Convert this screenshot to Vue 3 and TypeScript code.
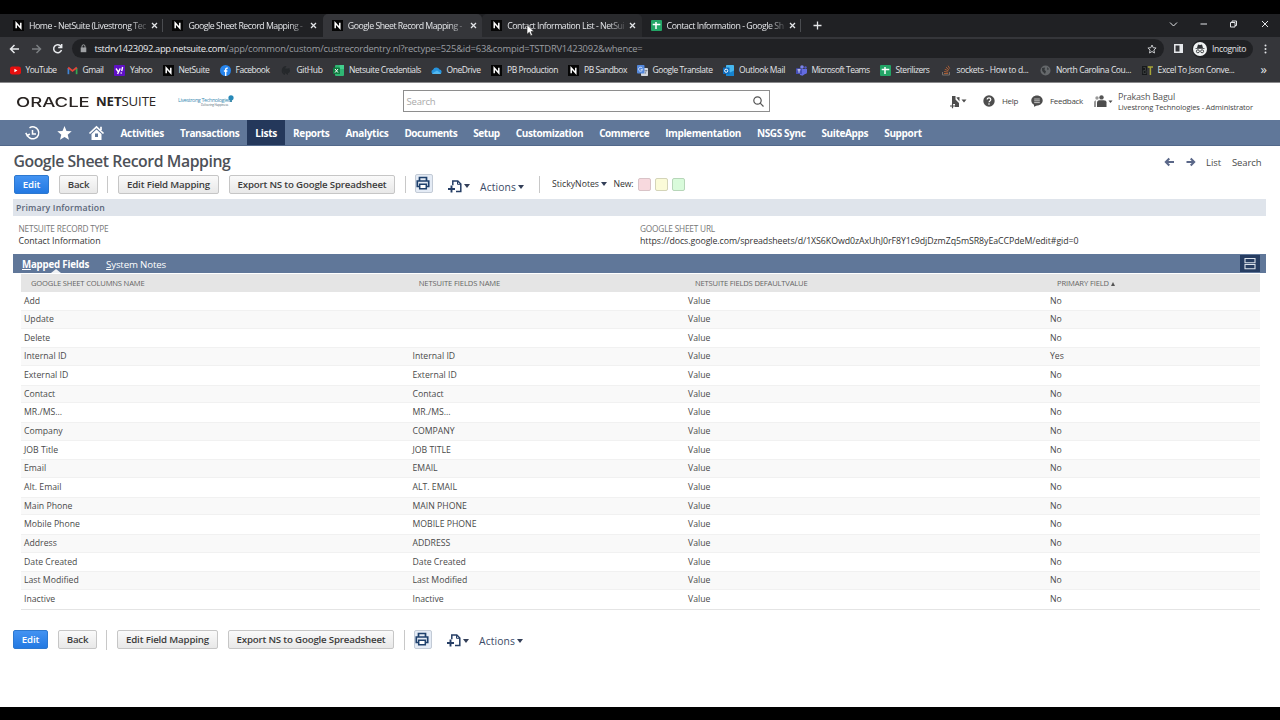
<script setup lang="ts">
import type { Directive } from 'vue'

interface Bookmark { label: string; kind: string; x: number; w: number }
interface Field { sheet: string; ns: string; primary?: boolean }

// Tracks a label so that it takes exactly the given width in pixels.
const vFit: Directive<HTMLElement, number> = {
  mounted(el, { value }) {
    const text = el.textContent ?? ''
    const natural = el.getBoundingClientRect().width
    el.style.letterSpacing = `${(value - natural) / text.length}px`
  },
}

const tabs = [
  { title: 'Home - NetSuite (Livestrong Tec', w: 117, kind: 'n', state: 'edged' },
  { title: 'Google Sheet Record Mapping -', w: 114, kind: 'n', state: '' },
  { title: 'Google Sheet Record Mapping -', w: 114, kind: 'n', state: 'active' },
  { title: 'Contact Information List - NetSui', w: 117, kind: 'n', state: 'hover' },
  { title: 'Contact Information - Google Sh', w: 117, kind: 'sheet', state: 'edged' },
]

const bookmarks: Bookmark[] = [
  { label: 'YouTube', kind: 'youtube', x: 9, w: 31 },
  { label: 'Gmail', kind: 'gmail', x: 66, w: 21 },
  { label: 'Yahoo', kind: 'yahoo', x: 113.5, w: 22 },
  { label: 'NetSuite', kind: 'n', x: 162, w: 31 },
  { label: 'Facebook', kind: 'facebook', x: 219, w: 34 },
  { label: 'GitHub', kind: 'github', x: 280, w: 26 },
  { label: 'Netsuite Credentials', kind: 'excel', x: 332.5, w: 72 },
  { label: 'OneDrive', kind: 'onedrive', x: 430, w: 34 },
  { label: 'PB Production', kind: 'n', x: 490.5, w: 51 },
  { label: 'PB Sandbox', kind: 'n', x: 567.5, w: 43 },
  { label: 'Google Translate', kind: 'translate', x: 636, w: 60 },
  { label: 'Outlook Mail', kind: 'outlook', x: 722.5, w: 46 },
  { label: 'Microsoft Teams', kind: 'teams', x: 795, w: 58 },
  { label: 'Sterilizers', kind: 'sheet', x: 879, w: 34 },
  { label: 'sockets - How to d...', kind: 'stack', x: 940, w: 72 },
  { label: 'North Carolina Cou...', kind: 'globe', x: 1039.5, w: 75 },
  { label: 'Excel To Json Conve...', kind: 'bt', x: 1141, w: 77 },
]
const pitch = (i: number) =>
  i < bookmarks.length - 1 ? bookmarks[i + 1].x - bookmarks[i].x : 92

const menu = [
  { label: 'Activities', w: 43.4 },
  { label: 'Transactions', w: 59.4 },
  { label: 'Lists', w: 21.8 },
  { label: 'Reports', w: 36.3 },
  { label: 'Analytics', w: 43 },
  { label: 'Documents', w: 52.8 },
  { label: 'Setup', w: 26.5 },
  { label: 'Customization', w: 67.5 },
  { label: 'Commerce', w: 49.9 },
  { label: 'Implementation', w: 75.9 },
  { label: 'NSGS Sync', w: 48.4 },
  { label: 'SuiteApps', w: 46.8 },
  { label: 'Support', w: 37.5 },
]

const fields: Field[] = [
  { sheet: 'Add', ns: '' },
  { sheet: 'Update', ns: '' },
  { sheet: 'Delete', ns: '' },
  { sheet: 'Internal ID', ns: 'Internal ID', primary: true },
  { sheet: 'External ID', ns: 'External ID' },
  { sheet: 'Contact', ns: 'Contact' },
  { sheet: 'MR./MS...', ns: 'MR./MS...' },
  { sheet: 'Company', ns: 'COMPANY' },
  { sheet: 'JOB Title', ns: 'JOB TITLE' },
  { sheet: 'Email', ns: 'EMAIL' },
  { sheet: 'Alt. Email', ns: 'ALT. EMAIL' },
  { sheet: 'Main Phone', ns: 'MAIN PHONE' },
  { sheet: 'Mobile Phone', ns: 'MOBILE PHONE' },
  { sheet: 'Address', ns: 'ADDRESS' },
  { sheet: 'Date Created', ns: 'Date Created' },
  { sheet: 'Last Modified', ns: 'Last Modified' },
  { sheet: 'Inactive', ns: 'Inactive' },
]
const bars = ['top', 'bottom']
</script>

<template>
  <div class="screen">
    <svg class="defs" width="0" height="0">
      <symbol id="n" viewBox="0 0 11 11"><rect width="11" height="11" fill="#050505" /><path d="M3.2 8.2V3l4.6 5V2.8" fill="none" stroke="#fff" stroke-width="1.5" /></symbol>
      <symbol id="sheet" viewBox="0 0 11 11"><rect width="11" height="11" rx="1" fill="#23a566" /><path d="M5 2v7M1.7 4.6h7.6" stroke="#fff" stroke-width="1.5" /></symbol>
      <symbol id="youtube" viewBox="0 0 11 11"><rect y="1.5" width="11" height="8" rx="2.3" fill="#e60f0f" /><path d="M4.4 3.8v3.4l3-1.7z" fill="#fff" /></symbol>
      <symbol id="gmail" viewBox="0 0 11 11"><path d="M1.4 9.2V3" stroke="#4285d4" stroke-width="1.7" /><path d="M9.6 9.2V3" stroke="#34a853" stroke-width="1.7" /><path d="M1.2 2.5l4.3 3.4 4.3-3.4" fill="none" stroke="#e5443a" stroke-width="1.8" /></symbol>
      <symbol id="yahoo" viewBox="0 0 11 11"><rect width="11" height="11" rx="1" fill="#5f10c6" /><path d="M2 3.5l2.3 3.3M6.2 3.5L3.6 9M8.6 2L7.7 6.2" stroke="#fff" stroke-width="1.4" /><circle cx="7.2" cy="8" r=".8" fill="#fff" /></symbol>
      <symbol id="facebook" viewBox="0 0 11 11"><circle cx="5.5" cy="5.5" r="5.5" fill="#2684ec" /><path d="M7.8 3.1H7c-1 0-1.3.5-1.3 1.3V11M3.9 6h3.5" fill="none" stroke="#fff" stroke-width="1.4" /></symbol>
      <symbol id="github" viewBox="0 0 11 11"><path d="M5.5 1a4.6 4.6 0 0 0-1.5 9V8.3C2.9 8.3 2.7 7 2 7M7 10V8.2c1.5-.3 2-1.2 2-2.6l-.5-1.4V3L7 3.5H4L2.5 3l-.3 2c0 2 .5 2.8 2 3.2" fill="#25282b" /></symbol>
      <symbol id="excel" viewBox="0 0 11 11"><rect x="2" width="9" height="11" rx="1" fill="#2fb673" /><path d="M6.5 0H11v4H6.5z" fill="#43ce8d" /><rect y="2.5" width="7" height="6.5" rx=".6" fill="#107c41" /><path d="M2 4l3 3.6M5 4L2 7.6" stroke="#fff" stroke-width="1" /></symbol>
      <symbol id="onedrive" viewBox="0 0 11 11"><path d="M2.5 9A2.2 2.2 0 0 1 2 4.7 3.5 3.5 0 0 1 8.5 4.5 2.3 2.3 0 0 1 9 9z" fill="#2794de" /><path d="M1 8.5l5-3 4.3 3L9 9H2z" fill="#53b9f0" /></symbol>
      <symbol id="translate" viewBox="0 0 11 11"><rect x="4" y="3" width="7" height="8" rx=".8" fill="#d3d7dd" /><rect width="7.5" height="8.5" rx=".8" fill="#5488dc" /><path d="M5.3 3.3A2 2 0 1 0 5.5 4.6H3.7" fill="none" stroke="#e8edf6" stroke-width=".8" /><path d="M7.5 5.5h3M9.5 5l-1.5 4" fill="none" stroke="#6b7686" stroke-width=".7" /></symbol>
      <symbol id="outlook" viewBox="0 0 11 11"><rect x="3" width="8" height="10" rx=".8" fill="#46b7ef" /><path d="M3 5.5l4 2 4-2V11H3z" fill="#1683cf" /><rect y="2.5" width="6.5" height="6.5" rx=".6" fill="#0f6cbd" /><circle cx="3.2" cy="5.7" r="1.6" fill="none" stroke="#fff" stroke-width="1" /></symbol>
      <symbol id="teams" viewBox="0 0 11 11"><circle cx="6" cy="2" r="1.8" fill="#7b83eb" /><circle cx="9.5" cy="2.5" r="1.2" fill="#5059c9" /><path d="M3 4h8v3.5A2 2 0 0 1 9 9l-2.5 1.8L4 10z" fill="#636be0" /><rect y="3.2" width="6" height="5.8" rx=".6" fill="#454eb8" /><path d="M1.5 4.8h3M3 4.8v3" stroke="#fff" stroke-width=".8" /></symbol>
      <symbol id="stack" viewBox="0 0 11 11"><path d="M1.5 7v3h7V7" fill="none" stroke="#77716d" stroke-width="1" /><path d="M3 8.5h4.2M3.1 6.5l4 .6M3.8 4.3l3.7 1.5M5 2.2l3 2.6M7 .7l1.8 3" stroke="#a65d36" stroke-width="1" /></symbol>
      <symbol id="globe" viewBox="0 0 11 11"><circle cx="5.5" cy="5.5" r="5" fill="#65686b" /><path d="M2 3l3-.5L4.5 5 6 6.2 5 9 2.2 6zM7 2l2 2-1.5 1.2z" fill="#34373a" /></symbol>
      <symbol id="bt" viewBox="0 0 11 11"><path d="M0 1h5v9H0z" fill="#17191b" /><path d="M1.3 2.5H3.5v3H1.3v3H4v-3" fill="none" stroke="#393c3c" /><path d="M5.8 2H11M8.4 2v8" stroke="#a7a437" stroke-width="1.5" /></symbol>
      <symbol id="printer" viewBox="0 0 14 14"><path d="M3.5 5V1.5h7V5M3 10.5H1.3V5h11.4v5.5H11" fill="none" stroke="#1f416d" stroke-width="1.7" /><path d="M3.7 8.2h6.6v4.5H3.7z" fill="#fff" stroke="#1f416d" stroke-width="1.5" /></symbol>
      <symbol id="newdoc" viewBox="0 0 14 13"><path d="M4.8 5.2V1h5l3 3v7.5H8" fill="none" stroke="#263e65" stroke-width="1.5" /><path d="M9.5 1v3.3h3.3" fill="none" stroke="#263e65" /><path d="M0 9h7M3.5 5.5v7" stroke="#263e65" stroke-width="1.9" /></symbol>
    </svg>

    <header class="browser">
      <div class="tabstrip">
        <div v-for="(t, i) in tabs" :key="i" class="tab" :class="t.state">
          <svg class="fav"><use :href="'#' + t.kind" /></svg>
          <span class="tab-title"><span v-fit="t.w" class="label">{{ t.title }}</span></span>
          <svg class="close" viewBox="0 0 7 7"><path d="M1 1l5 5M6 1L1 6" /></svg>
        </div>
        <svg class="plus" viewBox="0 0 9 9"><path d="M4.5 .5v8M.5 4.5h8" /></svg>
        <svg class="winctl" viewBox="0 0 100 14">
          <path d="M2 5.5l3.5 3.5L9 5.5M32.5 7h6.5M62.5 5.5h4.5v4.5h-4.5zM64 5.5V4h4.5v4.5h-1.5M94 4l6 6M100 4l-6 6" />
        </svg>
      </div>
      <div class="toolbar">
        <svg class="navs" viewBox="0 0 56 14">
          <path d="M11 7H2.8M6.5 3L2.5 7l4 4" stroke="#e8eaed" />
          <path d="M24 7h8.2M28.5 3l4 4-4 4" stroke="#7c7f83" />
          <path d="M53 4.5A4 4 0 1 0 53.5 8M53.7 2v3.5h-3.5" stroke="#e8eaed" />
        </svg>
        <div class="omnibox">
          <svg class="lock" viewBox="0 0 7 9"><path d="M.7 3.5h5.6v4.7H.7z" fill="#9fa1a4" /><path d="M2 4V2.3a1.5 1.5 0 0 1 3 0V4" fill="none" stroke="#9fa1a4" /></svg>
          <span class="url"><span v-fit="131" class="label host">tstdrv1423092.app.netsuite.com</span><span v-fit="417" class="label">/app/common/custom/custrecordentry.nl?rectype=525&amp;id=63&amp;compid=TSTDRV1423092&amp;whence=</span></span>
          <svg class="star" viewBox="0 0 10 10"><path d="M5 1l1.2 2.7 2.9.3L6.9 6l.6 3L5 7.5 2.5 9l.6-3L.9 4l2.9-.3z" /></svg>
        </div>
        <svg class="side" viewBox="0 0 9 9"><path d="M.8.8h7.4v7.4H.8z" fill="none" stroke="#e8eaed" stroke-width="1.5" /><path d="M5.5 0H9v9H5.5z" fill="#e8eaed" /></svg>
        <div class="incog">
          <svg viewBox="0 0 14 14"><circle cx="7" cy="7" r="7" fill="#f1f3f4" /><path d="M4 6l1-3.5 2 .5 2-.5L10 6zM2.5 6.2h9v.9h-9z" fill="#303336" /><circle cx="4.9" cy="9.3" r="1.5" fill="none" stroke="#303336" stroke-width=".9" /><circle cx="9.1" cy="9.3" r="1.5" fill="none" stroke="#303336" stroke-width=".9" /></svg>
          <span v-fit="34" class="label">Incognito</span>
        </div>
        <svg class="dots" viewBox="0 0 3 10"><circle cx="1.5" cy="1.5" r="1" /><circle cx="1.5" cy="5" r="1" /><circle cx="1.5" cy="8.5" r="1" /></svg>
      </div>
      <div class="bookmarks">
        <div v-for="(b, i) in bookmarks" :key="b.label" class="bm" :style="{ width: pitch(i) + 'px' }">
          <svg class="fav"><use :href="'#' + b.kind" /></svg>
          <span v-fit="b.w" class="label">{{ b.label }}</span>
        </div>
        <span class="more">»</span>
      </div>
    </header>

    <section class="brandbar">
      <div class="oracle"><span class="wide">ORACLE</span></div>
      <div class="netsuite"><b>NET</b>SUITE</div>
      <div class="partner">
        <span v-fit="52" class="label pname">Livestrong Technologies</span>
        <span v-fit="27" class="label psub">Delivering Happiness</span>
        <svg class="bulb" viewBox="0 0 6 8"><circle cx="3" cy="2.8" r="2.6" fill="#2789b8" /><path d="M2 5h2v2H2z" fill="#438ead" /></svg>
      </div>
      <div class="search">
        <span v-fit="29" class="label">Search</span>
        <svg viewBox="0 0 11 11"><circle cx="4.5" cy="4.5" r="3.7" /><path d="M7.2 7.2l3.3 3.3" /></svg>
      </div>
      <svg class="newrec" viewBox="0 0 18 14"><path d="M2 1h3.5v3.5L9 8V12H5V9H2z" fill="#4d4d4d" /><path d="M6.3 2.5L9.500 2v4.500z" fill="#4d4d4d" /><path d="M0 11h5M2.500 8.800v4.500" stroke="#4d4d4d" stroke-width="1.200" /><path d="M11.500 4.500h5l-2.500 3z" fill="#4d4d4d" /></svg>
      <div class="help"><svg viewBox="0 0 12 12"><circle cx="6" cy="6" r="5.7" fill="#4d4d4d" /><path d="M4.2 4.6c0-2.3 3.6-2.2 3.6 0C7.8 6 6 5.8 6 7.3M6 8.3v1.4" fill="none" stroke="#fff" stroke-width="1.2" /></svg><span v-fit="16" class="label">Help</span></div>
      <div class="feedback"><svg viewBox="0 0 12 12"><path d="M6 .5c3.2 0 5.7 2.2 5.7 5s-2.5 5-5.7 5L3 11.7V9.8C1.3 9 .3 7.4.3 5.5.3 2.7 2.8.5 6 .5z" fill="#4d4d4d" /><path d="M3.2 4h5.6M3.2 5.8h5.6M3.2 7.6h5.6" stroke="#ddd" stroke-width=".8" /></svg><span v-fit="33" class="label">Feedback</span></div>
      <svg class="people" viewBox="0 0 20 13"><path d="M1 12V7.5C1 6 2 5.5 3 5.5V12z" fill="#999" /><circle cx="4" cy="3" r="1.7" fill="#999" /><circle cx="8.5" cy="2.4" r="2.2" fill="#555" /><path d="M4 12V7.5C4 5.8 5.5 5.3 7 5.3h3.5c2 0 3 .8 3 2.2V12z" fill="#4d4d4d" /><path d="M15.5 5.5h4l-2 2.5z" fill="#4d4d4d" /></svg>
      <div class="user"><span v-fit="57" class="label uname">Prakash Bagul</span><span v-fit="135" class="label urole">Livestrong Technologies - Administrator</span></div>
    </section>

    <nav class="menu">
      <svg class="menu-icons" viewBox="0 0 80 16">
        <path d="M4.5 2.8A6 6 0 1 1 2 9.5M.8 7.8l1.4 2.8 2.6-1.6M7.5 5v4h3.5" fill="none" stroke="#fff" stroke-width="1.5" />
        <path d="M39.5 1l2 4.9 5.2.4-4 3.4 1.3 5.1-4.5-2.8L35 14.8l1.3-5.1-4-3.4 5.2-.4z" fill="#fff" />
        <path d="M64.5 8.5L71.5 2l7 6.5M76 1.8V5" fill="none" stroke="#fff" stroke-width="1.7" />
        <path d="M66.5 9l5-4.5 5 4.5v6h-10zM70 8.6v3.4h3V8.6z" fill="#fff" fill-rule="evenodd" />
      </svg>
      <a v-for="m in menu" :key="m.label" :class="{ on: m.label === 'Lists' }"><span v-fit="m.w" class="label">{{ m.label }}</span></a>
    </nav>

    <main>
      <div class="titlebar">
        <h1><span v-fit="217" class="label">Google Sheet Record Mapping</span></h1>
        <div class="pager">
          <svg viewBox="0 0 32 10"><path d="M10 5H2M5.3 1.5L1.8 5l3.5 3.5M22.5 5h8M26.7 1.5L30.2 5l-3.5 3.5" /></svg>
          <span v-fit="15" class="label">List</span><span v-fit="29.5" class="label">Search</span>
        </div>
      </div>

      <template v-for="bar in bars" :key="bar">
        <div class="actions" :class="bar">
          <button class="btn primary"><span v-fit="17.5" class="label">Edit</span></button>
          <button class="btn back"><span v-fit="21.5" class="label">Back</span></button>
          <i class="rule s1"></i>
          <button class="btn efm"><span v-fit="83" class="label">Edit Field Mapping</span></button>
          <button class="btn exp"><span v-fit="149" class="label">Export NS to Google Spreadsheet</span></button>
          <i class="rule s2"></i>
          <span class="print"><svg><use href="#printer" /></svg></span>
          <svg class="newdoc"><use href="#newdoc" /></svg>
          <i class="caret"></i>
          <span class="act"><span v-fit="36" class="label">Actions</span><i class="caret"></i></span>
          <template v-if="bar === 'top'">
            <i class="rule s3"></i>
            <span class="sticky"><span v-fit="47" class="label">StickyNotes</span><i class="caret"></i></span>
            <span class="new"><span v-fit="20" class="label">New:</span></span>
            <i class="note pink"></i><i class="note yellow"></i><i class="note green"></i>
          </template>
        </div>

        <template v-if="bar === 'top'">
          <div class="group"><span v-fit="89" class="label">Primary Information</span></div>
          <div class="info">
            <div><span v-fit="90" class="label key">NETSUITE RECORD TYPE</span><span v-fit="82" class="label">Contact Information</span></div>
            <div><span v-fit="75" class="label key">GOOGLE SHEET URL</span><span v-fit="438.5" class="label">https://docs.google.com/spreadsheets/d/1XS6KOwd0zAxUhJ0rF8Y1c9djDzmZq5mSR8yEaCCPdeM/edit#gid=0</span></div>
          </div>
          <div class="subtabs">
            <b><span v-fit="67" class="label"><u>M</u>apped Fields</span></b>
            <span v-fit="60" class="label"><u>S</u>ystem Notes</span>
            <svg class="view" viewBox="0 0 20 17"><rect width="20" height="17" fill="#263d62" /><path d="M5 3.5h10v4.2H5zM5 9.5h10v4.2H5z" fill="none" stroke="#dce3ec" stroke-width="1.1" /></svg>
          </div>
          <div class="table">
            <div class="row head">
              <span><span v-fit="113.5" class="label">GOOGLE SHEET COLUMNS NAME</span></span>
              <span><span v-fit="81.5" class="label">NETSUITE FIELDS NAME</span></span>
              <span><span v-fit="112.5" class="label">NETSUITE FIELDS DEFAULTVALUE</span></span>
              <span><span v-fit="52" class="label">PRIMARY FIELD</span><i class="up"></i></span>
            </div>
            <div v-for="f in fields" :key="f.sheet" class="row">
              <span>{{ f.sheet }}</span><span>{{ f.ns }}</span><span>Value</span><span>{{ f.primary ? 'Yes' : 'No' }}</span>
            </div>
          </div>
        </template>
      </template>
    </main>
    <footer></footer>

    <svg class="cursor" viewBox="0 0 9 13"><path d="M1 .5v9.8l2.3-2.1 1.5 3.5 1.7-.8L5 7.6h3z" fill="#fff" stroke="#222" stroke-width=".6" /></svg>
  </div>
</template>

<style>
html, body { margin: 0; background: #000; overflow: hidden; }
</style>

<style scoped>
* { box-sizing: border-box; }
.screen { position: relative; width: 1280px; height: 720px; display: flex; flex-direction: column; background: #fff; overflow: hidden; font-family: "Open Sans", "Noto Sans", sans-serif; color: #4a4a4a; }
.defs { position: absolute; }
.label { display: inline-block; white-space: pre; }
svg { flex: none; display: block; }
.fav { width: 11px; height: 11px; }

.browser { height: 83px; padding-top: 14px; background: #000; flex: none; color: #e3e5e8; border-bottom: 1px solid #8a8a8c; }
.tabstrip { height: 23px; display: flex; align-items: center; background: #202124; padding-left: 4px; }
.tab { width: 159.4px; height: 23px; flex: none; display: flex; align-items: center; padding-left: 9px; font-size: 8.8px; line-height: 22px; }
.tab.active { background: #35363a; border-radius: 5px 5px 0 0; }
.tab.hover { background: #292a2d; border-radius: 5px 5px 0 0; }
.tab.edged { background: linear-gradient(#4a4c50, #4a4c50) 100% 50% / 1px 13px no-repeat; }
.tab-title { width: 117px; margin-left: 5px; overflow: hidden; height: 22px; mask-image: linear-gradient(90deg, #000 86%, rgba(0, 0, 0, .2)); }
.close { width: 7px; height: 7px; margin-left: 5px; }
.close path, .plus path, .winctl path { stroke: #e3e5e8; stroke-width: 1.3; fill: none; }
.plus { width: 9px; height: 9px; margin-left: 12px; }
.winctl { width: 100px; height: 14px; margin: -3px 12px 0 auto; }
.winctl path { stroke-width: 1; }
.toolbar { height: 23px; display: flex; align-items: center; background: #35363a; padding-left: 8px; }
.navs { width: 56px; height: 14px; }
.navs path { fill: none; stroke-width: 1.5; }
.omnibox { width: 1092px; height: 19px; margin-left: 8px; border-radius: 10px; background: #202124; display: flex; align-items: center; padding: 0 7px 0 8px; }
.lock { width: 7px; height: 9px; }
.url { margin-left: 7.5px; font-size: 9.4px; color: #9a9da1; white-space: nowrap; line-height: 18px; }
.host { color: #e8eaed; }
.star { width: 10px; height: 10px; margin-left: auto; }
.star path { fill: none; stroke: #c6c8cb; }
.side { width: 9px; height: 9px; margin-left: 10px; }
.incog { width: 61px; height: 18px; margin-left: 9px; display: flex; align-items: center; gap: 5px; background: #202124; border-radius: 9px; padding-left: 1px; font-size: 8.6px; }
.incog svg { width: 14px; height: 14px; }
.dots { width: 3px; height: 10px; margin-left: 11px; fill: #e3e5e8; }
.bookmarks { height: 22px; display: flex; align-items: center; background: #35363a; padding: 0 0 2px 9.5px; font-size: 8.5px; }
.bm { flex: none; display: flex; align-items: center; gap: 5px; white-space: nowrap; line-height: 20px; }
.more { margin-left: 27px; font-size: 13px; line-height: 18px; margin-top: -3px; }

.brandbar { height: 37px; flex: none; display: grid; grid-template-columns: 80px 82px 224.5px 367px 213.5px 48px 62px 25px 1fr; padding-left: 16px; align-items: center; background: #fff; }
.oracle { font-family: "Inter", sans-serif; font-size: 13.5px; font-weight: 500; color: #2a2523; height: 18px; line-height: 18px; }
.wide { display: inline-block; transform-origin: 0 50%; transform: scaleX(1.37); }
.netsuite { height: 18px; font-size: 13.2px; line-height: 17px; color: #2a2523; letter-spacing: -.1px; }
.partner { position: relative; height: 20px; }
.partner .label { position: absolute; white-space: nowrap; }
.pname { left: 0; top: 4px; font-size: 5.5px; color: #3f8fb5; line-height: 8px; }
.psub { left: 23px; top: 11px; font-size: 3px; color: #4e6470; line-height: 5px; }
.bulb { position: absolute; left: 50px; top: 3px; width: 6px; height: 8px; }
.search { height: 22px; margin-top: -1px; border: 1px solid #8e8e8e; display: flex; align-items: center; justify-content: space-between; padding: 0 5px 0 3px; font-size: 9.5px; color: #a9a9a9; }
.search svg { width: 11px; height: 11px; }
.search path, .search circle { fill: none; stroke: #555; stroke-width: 1.2; }
.newrec { width: 18px; height: 14px; margin-left: 180px; }
.help, .feedback, .people, .user { white-space: nowrap; }
.help, .feedback { display: flex; align-items: center; gap: 7px; font-size: 8px; line-height: 10px; color: #444; margin-top: -1px; }
.help svg, .feedback svg { width: 12px; height: 12px; }
.people { width: 20px; height: 13px; }
.user { display: flex; flex-direction: column; align-items: flex-start; }
.uname { font-size: 9px; line-height: 10px; color: #555; }
.urole { font-size: 7.5px; line-height: 10px; color: #444; }

.menu { height: 26px; flex: none; display: flex; background: #607799; border-bottom: 1px solid #52688a; padding-left: 25px; color: #fff; font-size: 10px; font-weight: 700; line-height: 26px; }
.menu-icons { width: 80px; height: 16px; margin: 5px 7.5px 0 0; }
.menu a { padding: 0 8px; }
.menu a.on { background: #24385b; }

main { flex: 1; }
.titlebar { height: 27px; display: flex; justify-content: space-between; padding: 0 18.5px 0 13.4px; }
h1 { margin: 0; font-size: 15.8px; font-weight: 600; line-height: 30px; color: #4d5158; }
.pager { display: flex; align-items: center; padding-top: 5px; font-size: 9.5px; }
.pager svg { width: 32px; height: 10px; margin-right: 10px; }
.pager svg path { fill: none; stroke: #5a6788; stroke-width: 2; }
.pager .label + .label { margin-left: 11px; }

.actions { display: flex; align-items: center; height: 22px; padding-left: 14px; color: #333; }
.actions.bottom { margin-top: 19px; padding-left: 13px; }
.btn { height: 19px; padding: 0; border: 1px solid #c6c6c6; border-radius: 2px; background: linear-gradient(#fafafa, #e8e8e8); color: #3c3c3c; font: 600 9.7px/17px "Open Sans", sans-serif; text-align: center; flex: none; }
.btn.primary { width: 35px; border-color: #2d78cf; background: linear-gradient(#4393f2, #2379e2); color: #fff; }
.back { width: 39px; margin-left: 10px; }
.rule { width: 1px; height: 17px; background: #c8c8c8; flex: none; }
.bottom .rule { height: 20px; }
.s1 { margin: 0 10px 0 9px; }
.efm { width: 101px; }
.exp { width: 166px; margin-left: 10px; }
.s2 { margin: 0 9px 0 10px; }
.print { width: 18px; height: 19px; border: 1px solid #c3cbd6; border-radius: 2px; background: #e4ebf5; padding: 1px 0; flex: none; margin-top: -1px; }
.print svg { width: 14px; height: 14px; }
.newdoc { width: 14px; height: 13px; margin: 4px 2px 0 15px; }
.bottom .newdoc { margin-top: 2px; }
.caret { width: 0; height: 0; border: 3px solid transparent; border-top: 4px solid #333f58; border-bottom: 0; flex: none; display: inline-block; }
.newdoc + .caret { margin-top: 4px; }
.bottom .newdoc + .caret { margin-top: 2px; }
.act { display: flex; align-items: center; gap: 1.5px; margin: 5px 0 0 10px; font-size: 10.3px; color: #3b4a66; }
.bottom .act { margin-top: 2px; }
.s3 { margin-left: 15px; }
.sticky { display: flex; align-items: center; gap: 2px; margin-left: 12.5px; font-size: 8.7px; }
.new { margin: 0 4.5px 0 6.5px; font-size: 8.7px; }
.note { width: 13px; height: 13px; border: 1px solid #ccc; border-radius: 2px; margin-right: 4px; }
.pink { background: #f7d9de; border-color: #d9c3c7; }
.yellow { background: #fbfbd8; border-color: #d4d4b8; }
.green { background: #d9fbdb; border-color: #b7d6b9; }

.group { height: 17px; margin: 4px 14px 0 13px; padding-left: 3px; background: #dfe4eb; font-size: 8.7px; font-weight: 600; line-height: 18px; color: #5a6578; }
.info { height: 38px; display: grid; grid-template-columns: 621.5px 1fr; padding: 7px 0 0 18.5px; font-size: 8.8px; line-height: 12px; color: #333; }
.info > div { display: flex; flex-direction: column; align-items: flex-start; }
.key { font-size: 8.3px; color: #777; }
.subtabs { height: 19px; margin: 0 14px 0 13px; padding-left: 9px; background: #607799; color: #fff; display: flex; align-items: center; gap: 17px; font-size: 9.7px; line-height: 21px; }
.subtabs > .label { margin-top: 1px; }
.subtabs b { position: relative; height: 19px; }
.subtabs b::after { content: ""; position: absolute; left: 29px; top: 15px; border: 5px solid transparent; border-top: 0; border-bottom: 4px solid #f0f2f5; }
.view { width: 20px; height: 17px; margin-left: auto; margin-right: 6.5px; }
.table { margin: 1px 20px 0 20.5px; border-bottom: 1px solid #e4e4e4; }
.row { height: 18.67px; display: grid; grid-template-columns: 388.5px 275.5px 362px 1fr; padding-left: 3.5px; font-size: 8.7px; line-height: 18px; color: #4a4a4a; }
.row:nth-child(odd) { background: #f9f9f9; box-shadow: inset 0 1px #f1f1f1, inset 0 -1px #f1f1f1; }
.row.head { height: 17.5px; background: #e5e5e5; box-shadow: none; font-size: 7.6px; color: #666; padding-left: 10.5px; line-height: 18px; }
.row.head > span:nth-child(2) { margin-left: -.8px; }
.up { display: inline-block; border: 2px solid transparent; border-top: 0; border-bottom: 4px solid #555; margin-left: 2px; }
footer { height: 13px; background: #000; flex: none; }
.cursor { position: absolute; left: 526px; top: 24px; width: 9px; height: 13px; }
</style>
